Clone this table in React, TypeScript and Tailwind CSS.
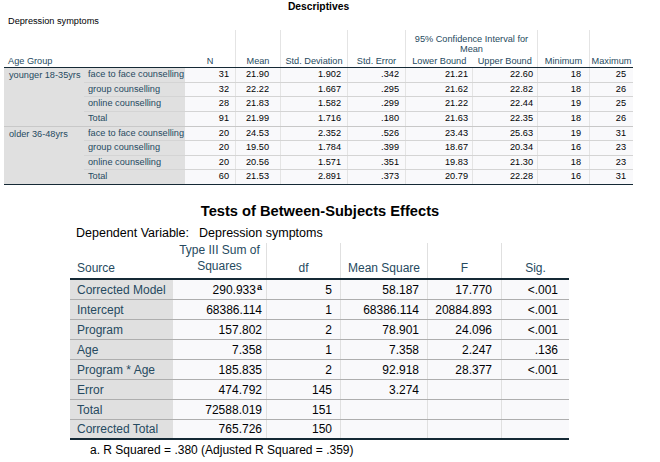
const desc = [
  {
    group: "younger 18-35yrs",
    rows: [
      ["face to face counselling", "31", "21.90", "1.902", ".342", "21.21", "22.60", "18", "25"],
      ["group counselling", "32", "22.22", "1.667", ".295", "21.62", "22.82", "18", "26"],
      ["online counselling", "28", "21.83", "1.582", ".299", "21.22", "22.44", "19", "25"],
      ["Total", "91", "21.99", "1.716", ".180", "21.63", "22.35", "18", "26"],
    ],
  },
  {
    group: "older 36-48yrs",
    rows: [
      ["face to face counselling", "20", "24.53", "2.352", ".526", "23.43", "25.63", "19", "31"],
      ["group counselling", "20", "19.50", "1.784", ".399", "18.67", "20.34", "16", "23"],
      ["online counselling", "20", "20.56", "1.571", ".351", "19.83", "21.30", "18", "23"],
      ["Total", "60", "21.53", "2.891", ".373", "20.79", "22.28", "16", "31"],
    ],
  },
];

// widths of the numeric columns in the descriptives table
const numCols = [
  "w-[50px] pr-[6px]",
  "w-[45px] pr-[11px] border-l border-[#e4e4e4]",
  "w-[67px] pr-[6px] border-l border-[#e4e4e4]",
  "w-[58px] pr-[6px] border-l border-[#e4e4e4]",
  "w-[67px] pr-[4px] border-l border-[#e4e4e4]",
  "w-[65px] pr-[4px] border-l border-[#e4e4e4]",
  "w-[52px] pr-[8px] border-l border-[#e4e4e4]",
  "w-[44px] pr-[7px] border-l border-[#e4e4e4]",
];

const tests = [
  ["Corrected Model", "290.933", "5", "58.187", "17.770", "<.001", true],
  ["Intercept", "68386.114", "1", "68386.114", "20884.893", "<.001"],
  ["Program", "157.802", "2", "78.901", "24.096", "<.001"],
  ["Age", "7.358", "1", "7.358", "2.247", ".136"],
  ["Program * Age", "185.835", "2", "92.918", "28.377", "<.001"],
  ["Error", "474.792", "145", "3.274", "", ""],
  ["Total", "72588.019", "151", "", "", ""],
  ["Corrected Total", "765.726", "150", "", "", ""],
];

function Descriptives() {
  return (
    <div className="pl-[4px] w-[633px] text-[9.2px] leading-none">
      <div className="h-[14px] flex items-center justify-center font-bold text-[10.3px] text-black">Descriptives</div>
      <div className="h-[16px] flex items-center pl-[4px] text-[#010205]">Depression symptoms</div>

      {/* header */}
      <div className="flex h-[38px] border-b-[1.5px] border-[#152935] text-[#264a60]">
        <div className="w-[181px] flex items-end pl-[4px] pb-[1px]">Age Group</div>
        <div className="w-[50px] flex items-end justify-center pb-[1px]">N</div>
        <div className="w-[45px] border-l border-[#e4e4e4] flex items-end justify-center pb-[1px]">Mean</div>
        <div className="w-[67px] border-l border-[#e4e4e4] flex items-end justify-center pb-[1px]">Std. Deviation</div>
        <div className="w-[58px] border-l border-[#e4e4e4] flex items-end justify-center pb-[1px]">Std. Error</div>
        <div className="w-[132px] border-l border-[#e4e4e4] flex flex-col">
          <div className="flex-1 flex flex-col items-center justify-center pt-[2px] leading-[10px]">
            <span>95% Confidence Interval for</span>
            <span>Mean</span>
          </div>
          <div className="flex h-[12px]">
            <div className="w-[67px] flex items-end justify-center pb-[1px]">Lower Bound</div>
            <div className="w-[65px] flex items-end justify-center pb-[1px]">Upper Bound</div>
          </div>
        </div>
        <div className="w-[52px] border-l border-[#e4e4e4] flex items-end justify-center pb-[1px]">Minimum</div>
        <div className="w-[44px] border-l border-[#e4e4e4] flex items-end justify-center pb-[1px]">Maximum</div>
      </div>

      {desc.map((g, gi) => (
        <div
          key={g.group}
          className={
            gi === desc.length - 1
              ? "flex border-b-[1.5px] border-[#152935]"
              : "flex border-b border-[#c8c8c8]"
          }
        >
          <div className="w-[80px] bg-[#e0e0e0] text-[#264a60] pl-[5px] pt-[3px]">{g.group}</div>
          <div className="flex flex-col">
            {g.rows.map((r, ri) => (
              <div
                key={ri}
                className={
                  ri < g.rows.length - 1
                    ? "flex h-[14.5px] border-b border-[#d4d4d4]"
                    : "flex h-[14px]"
                }
              >
                <div className="w-[101px] bg-[#e0e0e0] text-[#264a60] pl-[4px] flex items-center">{r[0]}</div>
                {r.slice(1).map((v, ci) => (
                  <div key={ci} className={`${numCols[ci]} bg-[#f9f9fb] text-[#010205] flex items-center justify-end`}>
                    {v}
                  </div>
                ))}
              </div>
            ))}
          </div>
        </div>
      ))}
    </div>
  );
}

function Tests() {
  const cols = [
    "w-[93px] pr-[4px]",
    "w-[74px] pr-[8px] border-l border-[#e0e0e0]",
    "w-[87px] pr-[8px] border-l border-[#e0e0e0]",
    "w-[74px] pr-[9px] border-l border-[#e0e0e0]",
    "w-[68px] pr-[11px] border-l border-[#e0e0e0]",
  ];
  return (
    <div className="text-[12px] leading-none">
      <div className="w-[640px] h-[20px] flex items-center justify-center font-bold text-[14.67px] text-black">
        Tests of Between-Subjects Effects
      </div>
      <div className="h-[22px] pt-[2px] flex items-center pl-[76px] text-[12.5px] text-black">
        Dependent Variable:<span className="ml-[10px]">Depression symptoms</span>
      </div>
      <div className="ml-[70px] w-[499px]">
        <div className="flex h-[37px] border-b-2 border-[#152935] text-[#264a60]">
          <div className="w-[103px] flex items-end pl-[7px] pb-[4px]">Source</div>
          <div className="w-[93px] flex flex-col items-center justify-end pb-[4px] leading-[16px]">
            <span>Type III Sum of</span>
            <span>Squares</span>
          </div>
          <div className="w-[74px] border-l border-[#e0e0e0] flex items-end justify-center pb-[4px]">df</div>
          <div className="w-[87px] border-l border-[#e0e0e0] flex items-end justify-center pb-[4px]">Mean Square</div>
          <div className="w-[74px] border-l border-[#e0e0e0] flex items-end justify-center pb-[4px]">F</div>
          <div className="w-[68px] border-l border-[#e0e0e0] flex items-end justify-center pb-[4px]">Sig.</div>
        </div>
        {tests.map((r, i) => (
          <div
            key={i}
            className={
              i === tests.length - 1
                ? "flex h-[20px] border-b-2 border-[#152935]"
                : "flex h-[20px] border-b border-[#aeaeae]"
            }
          >
            <div className="w-[103px] bg-[#e0e0e0] text-[#264a60] pl-[7px] flex items-center">{r[0]}</div>
            {r.slice(1, 6).map((v, ci) => (
              <div key={ci} className={`${cols[ci]} bg-[#f9f9fb] text-[#010205] flex items-center justify-end`}>
                {v}
                {ci === 0 && r[6] ? <sup className="text-[9px] font-bold relative -top-[3px] ml-[1px]">a</sup> : null}
              </div>
            ))}
          </div>
        ))}
        <div className="h-[20px] flex items-center pl-[20px] text-black">
          a. R Squared = .380 (Adjusted R Squared = .359)
        </div>
      </div>
    </div>
  );
}

export default function App() {
  return (
    <div className="w-[660px] h-[462px] bg-white overflow-hidden font-['Liberation_Sans',Arial,sans-serif]">
      <Descriptives />
      <div className="mt-[16px]">
        <Tests />
      </div>
    </div>
  );
}
